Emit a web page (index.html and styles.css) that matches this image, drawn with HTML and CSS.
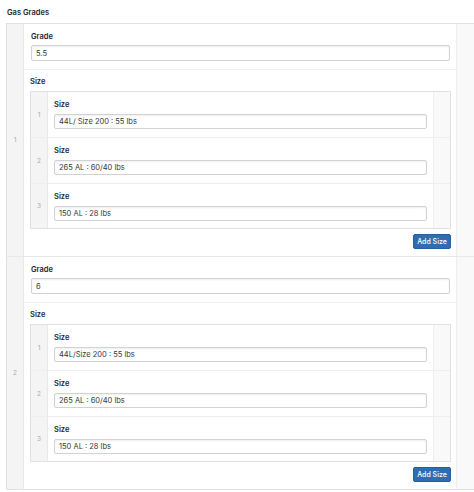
FILE: index.html
```html
<!DOCTYPE html>
<html lang="en">
<head>
    <meta charset="UTF-8">
    <title>Gas Grades</title>
    <link rel="stylesheet" href="styles.css">
</head>
<body>
<div class="title">Gas Grades</div>
<div class="repeater">
    <div class="row">
        <div class="order">1</div>
        <div class="fields">
            <div class="field">
                <div class="field-label">Grade</div>
                <input class="text" type="text" value="5.5">
            </div>
            <div class="field">
                <div class="field-label">Size</div>
                <div class="sub">
                    <div class="sub-row">
                        <div class="sub-order">1</div>
                        <div class="sub-field">
                            <div class="field-label">Size</div>
                            <input class="text" type="text" value="44L/ Size 200 : 55 lbs">
                        </div>
                        <div class="sub-remove"></div>
                    </div>
                    <div class="sub-row">
                        <div class="sub-order">2</div>
                        <div class="sub-field">
                            <div class="field-label">Size</div>
                            <input class="text" type="text" value="265 AL : 60/40 lbs">
                        </div>
                        <div class="sub-remove"></div>
                    </div>
                    <div class="sub-row">
                        <div class="sub-order">3</div>
                        <div class="sub-field">
                            <div class="field-label">Size</div>
                            <input class="text" type="text" value="150 AL : 28 lbs">
                        </div>
                        <div class="sub-remove"></div>
                    </div>
                </div>
                <div class="actions"><a class="button">Add Size</a></div>
            </div>
        </div>
        <div class="remove"></div>
    </div>
    <div class="row">
        <div class="order">2</div>
        <div class="fields">
            <div class="field">
                <div class="field-label">Grade</div>
                <input class="text" type="text" value="6">
            </div>
            <div class="field">
                <div class="field-label">Size</div>
                <div class="sub">
                    <div class="sub-row">
                        <div class="sub-order">1</div>
                        <div class="sub-field">
                            <div class="field-label">Size</div>
                            <input class="text" type="text" value="44L/Size 200 : 55 lbs">
                        </div>
                        <div class="sub-remove"></div>
                    </div>
                    <div class="sub-row">
                        <div class="sub-order">2</div>
                        <div class="sub-field">
                            <div class="field-label">Size</div>
                            <input class="text" type="text" value="265 AL : 60/40 lbs">
                        </div>
                        <div class="sub-remove"></div>
                    </div>
                    <div class="sub-row">
                        <div class="sub-order">3</div>
                        <div class="sub-field">
                            <div class="field-label">Size</div>
                            <input class="text" type="text" value="150 AL : 28 lbs">
                        </div>
                        <div class="sub-remove"></div>
                    </div>
                </div>
                <div class="actions"><a class="button">Add Size</a></div>
            </div>
        </div>
        <div class="remove"></div>
    </div>
</div>
</body>
</html>
```
FILE: styles.css
```css
*{
    margin: 0;
    padding: 0;
    box-sizing: border-box;
}
body{
    width: 474px;
    overflow: hidden;
    background: #fff;
    font-family: Inter, "Liberation Sans", sans-serif;
    color: #23282d;
}
.field-label, .title{
    font-size: 7.5px;
    font-weight: 600;
    line-height: 9px;
}
.field-label{
    height: 9px;
}
.title{
    padding: 8px 0 6px 7px;
}
.repeater{
    margin-left: 6px;
    width: 470px;
    border: 1px solid #e1e1e1;
    border-right: 0;
}
.row{
    display: flex;
    border-top: 1px solid #e8e8e8;
}
.row:first-child{
    border-top: 0;
}
.order, .sub-order{
    display: flex;
    align-items: center;
    justify-content: center;
    background: #f4f4f4;
    color: #aaa;
    font-size: 6.5px;
    border-right: 1px solid #e8e8e8;
}
.order{
    width: 17px;
}
.fields{
    width: 432px;
}
.remove{
    flex: 1;
    background: #f9f9f9;
    border-left: 1px solid #eee;
}
.field{
    padding: 8px 6px 8px 7px;
}
.field + .field{
    border-top: 1px solid #f1f1f1;
    padding: 7px 5px 7px 6px;
}
.field-label + .text{
    margin-top: 4px;
}
.field-label + .sub{
    margin-top: 5px;
}
.text{
    display: block;
    width: 100%;
    height: 16px;
    padding: 0 4px;
    border: 1px solid #d2d2d2;
    border-radius: 2px;
    box-shadow: inset 0 1px 2px rgba(0,0,0,0.07);
    font-family: Inter, "Liberation Sans", sans-serif;
    font-size: 7.5px;
    color: #32373c;
    background: #fff;
    outline: none;
}
.sub{
    border: 1px solid #e1e1e1;
}
.sub-row{
    display: flex;
    border-top: 1px solid #eee;
}
.sub-row:first-child{
    border-top: 0;
}
.sub-order{
    width: 17px;
}
.sub-field{
    flex: 1;
    padding: 8px 6px 8px 6px;
}
.sub-row:last-child .sub-field{
    padding-bottom: 7px;
}
.sub-field .field-label + .text{
    margin-top: 5px;
    height: 15px;
}
.sub-remove{
    width: 17px;
    background: #f9f9f9;
    border-left: 1px solid #eee;
}
.actions{
    display: flex;
    justify-content: flex-end;
    margin-top: 5px;
}
.button{
    display: block;
    width: 38px;
    height: 15px;
    line-height: 13px;
    text-align: center;
    background: #2f6db3;
    border: 1px solid #275f9e;
    border-radius: 2px;
    color: #fff;
    font-size: 7px;
    font-weight: 500;
}
```
